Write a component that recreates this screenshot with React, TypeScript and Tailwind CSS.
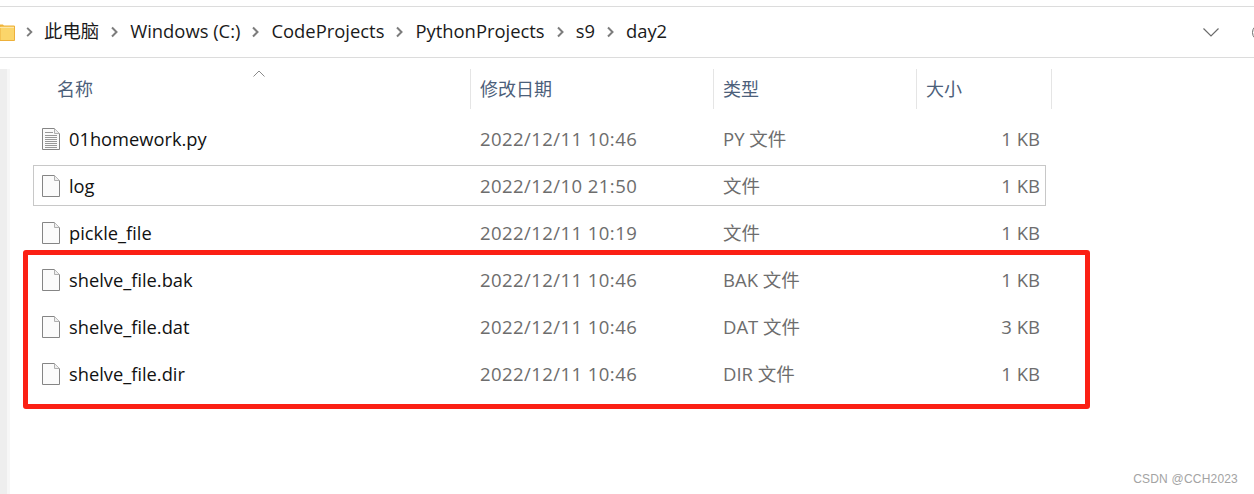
import React from 'react'

const FONT = "font-['Open_Sans','Noto_Sans_CJK_SC',sans-serif]"

const files = [
  { name: '01homework.py', date: '2022/12/11 10:46', type: 'PY 文件', size: '1 KB', lined: true },
  { name: 'log', date: '2022/12/10 21:50', type: '文件', size: '1 KB', outlined: true },
  { name: 'pickle_file', date: '2022/12/11 10:19', type: '文件', size: '1 KB' },
  { name: 'shelve_file.bak', date: '2022/12/11 10:46', type: 'BAK 文件', size: '1 KB' },
  { name: 'shelve_file.dat', date: '2022/12/11 10:46', type: 'DAT 文件', size: '3 KB' },
  { name: 'shelve_file.dir', date: '2022/12/11 10:46', type: 'DIR 文件', size: '1 KB' },
]

const crumbs = ['此电脑', 'Windows (C:)', 'CodeProjects', 'PythonProjects', 's9', 'day2']

function Chevron({ className = 'w-[31px]' }: { className?: string }) {
  return (
    <svg height="12" viewBox="0 0 31 12" className={`shrink-0 ${className}`} preserveAspectRatio="xMidYMid meet">
      <path d="M13 1.5 L17.5 6 L13 10.5" fill="none" stroke="#7c7c7c" strokeWidth="2" />
    </svg>
  )
}

function FileIcon({ lined }: { lined?: boolean }) {
  return (
    <svg width="18" height="22" viewBox="0 0 18 22" className="shrink-0">
      <path d="M0.5 0.5 H12.5 L17.5 5.5 V21.5 H0.5 Z" fill="#fbfbfb" stroke="#858585" />
      <path d="M12.5 0.5 V5.5 H17.5" fill="#eeeeee" stroke="#b0b0b0" />
      {lined && (
        <path
          d="M3 4.5 H11 M3 7.5 H15 M3 9.5 H15 M3 11.5 H15 M3 13.5 H15 M3 15.5 H15 M3 17.5 H15 M3 19.5 H15"
          stroke="#989898"
        />
      )}
    </svg>
  )
}

function HeaderCell({ label, className }: { label: string; className: string }) {
  return (
    <div className={`flex items-center border-l border-[#e5e5e5] pl-[9px] pt-[1px] text-[18px] text-[#4c607a] ${className}`}>
      {label}
    </div>
  )
}

export default function App() {
  return (
    <div className={`relative flex h-[494px] w-[1254px] flex-col overflow-hidden bg-white ${FONT}`}>
      {/* Address bar */}
      <div className="mt-[6px] flex h-[52px] shrink-0 items-center border-y border-[#dcdcdc]">
        <svg width="15" height="17" viewBox="0 0 15 17" className="shrink-0">
          <path d="M0 0.5 H3 L4 2 H0 Z" fill="#f3b73a" />
          <path d="M0 2 H14.5 V16.5 H0 Z" fill="#fbd56a" stroke="#edb03a" />
          <path d="M0 3.5 H14" stroke="#fde6a8" />
        </svg>
        <Chevron className="w-[29px]" />
        {crumbs.map((crumb, i) => (
          <React.Fragment key={crumb}>
            <span className="relative bottom-[1px] text-[18.4px] text-[#1a1a1a]">{crumb}</span>
            {i < crumbs.length - 1 && <Chevron />}
          </React.Fragment>
        ))}
        <svg width="16" height="9" viewBox="0 0 16 9" className="ml-auto mr-[33px] shrink-0">
          <path d="M0.5 0.5 L8 8 L15.5 0.5" fill="none" stroke="#6b6b6b" strokeWidth="1.2" />
        </svg>
        <div className="mr-[-15px] h-[17px] w-[17px] shrink-0 rounded-full border border-[#6b6b6b]" />
      </div>

      <div className="flex min-h-0 flex-1">
        <div className="mt-[11px] w-[7px] shrink-0 bg-[#eeeeee]" />
        <div className="mt-[11px] w-[3px] shrink-0 bg-[#f7f7f7]" />
        <div className="flex-1 pl-[23px] pt-[11px]">
          {/* Column headers */}
          <div className="relative flex h-[40px]">
            <div className="flex w-[437px] items-center pl-[24px] pt-[1px] text-[18px] text-[#4c607a]">名称</div>
            <svg width="12" height="7" viewBox="0 0 12 7" className="absolute left-[220px] top-[1px]">
              <path d="M0.5 6.5 L6 1 L11.5 6.5" fill="none" stroke="#8a8a8a" />
            </svg>
            <HeaderCell label="修改日期" className="w-[243px]" />
            <HeaderCell label="类型" className="w-[203px]" />
            <HeaderCell label="大小" className="w-[136px] border-r" />
          </div>

          {/* File rows */}
          <div className="mt-[9px] flex w-[1013px] flex-col gap-[6px]">
            {files.map(file => (
              <div
                key={file.name}
                className={`flex h-[41px] items-center border ${file.outlined ? 'border-[#c8c8c8]' : 'border-transparent'}`}
              >
                <div className="flex w-[436px] items-center gap-[9px] pl-[8px] text-[18.3px] text-[#111111]">
                  <FileIcon lined={file.lined} />
                  {file.name}
                </div>
                <div className="w-[243px] pl-[10px] text-[18.5px] tracking-[0.44px] text-[#6d6d6d]">{file.date}</div>
                <div className="w-[203px] pl-[10px] text-[18.5px] text-[#6d6d6d]">{file.type}</div>
                <div className="w-[124px] text-right text-[18.5px] text-[#6d6d6d]">{file.size}</div>
              </div>
            ))}
          </div>
        </div>
      </div>

      {/* Red annotation drawn on top of the screenshot */}
      <div className="absolute left-[23px] top-[250px] h-[159px] w-[1067px] rounded-[3px] border-[5px] border-[#fb2014]" />

      <div className="absolute bottom-[6px] right-[16px] font-['Liberation_Sans',sans-serif] text-[12px] tracking-[0.2px] text-[#a3a3a3]">
        CSDN @CCH2023
      </div>
    </div>
  )
}
